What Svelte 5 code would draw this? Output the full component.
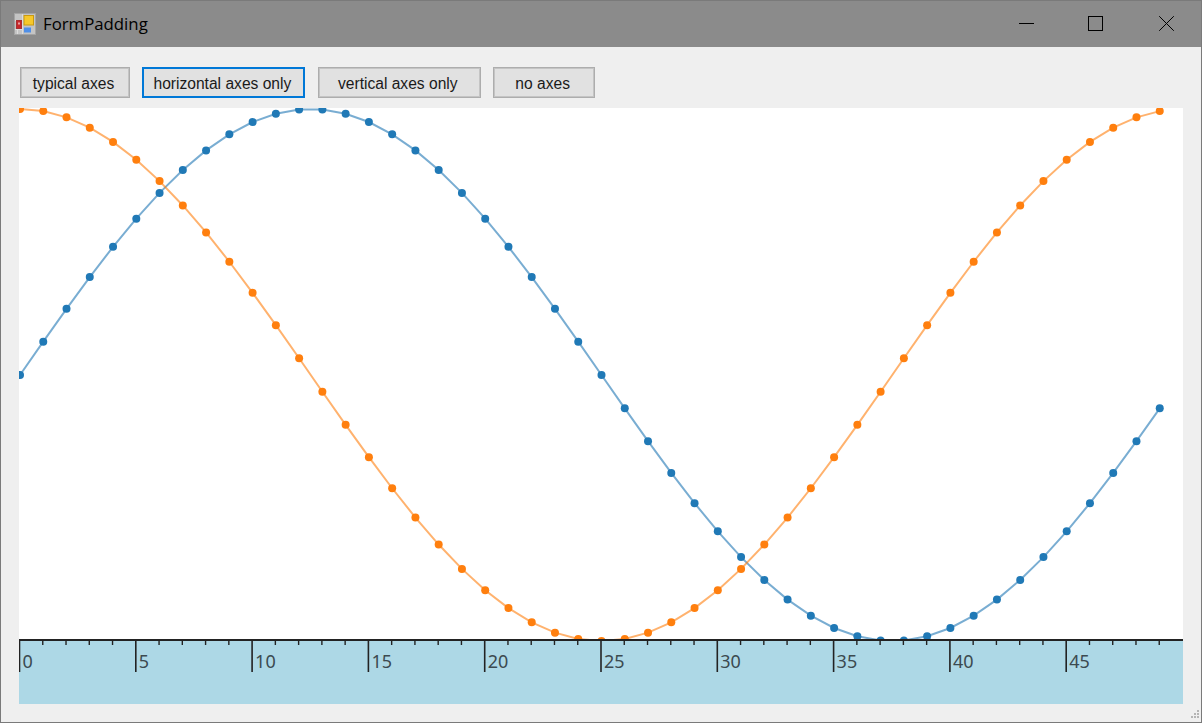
<script>
  const W = 1164, PH = 532, H = 596;
  const X = (i) => 1 + i * 23.26;
  const Ys = (f) => Array.from({ length: 50 }, (_, i) => ({ x: X(i), y: 267 - 266 * f((2 * Math.PI * i) / 50) }));
  const blue = Ys(Math.sin);
  const orange = Ys(Math.cos);
  const pts = (a) => a.map((p) => `${p.x.toFixed(2)},${p.y.toFixed(2)}`).join(' ');
  const ticks = Array.from({ length: 50 }, (_, i) => ({ i, x: X(i) - 0.5, major: i % 5 === 0 }));
  const buttons = [
    { label: 'typical axes', cls: 'w1' },
    { label: 'horizontal axes only', cls: 'w2 focus' },
    { label: 'vertical axes only', cls: 'w2' },
    { label: 'no axes', cls: 'w3' }
  ];
</script>

<div class="window">
  <header class="titlebar">
    <svg class="appicon" width="22" height="22" viewBox="0 0 22 22">
      <rect x="0.5" y="0.5" width="21" height="21" fill="#c4c4c4" stroke="#a4a4a4" />
      <path d="M1 7.5h7M1 16.5h7M8.5 1v20M3.5 16v5" stroke="#dcdcdc" fill="none" />
      <rect x="2.5" y="7.5" width="5" height="8" fill="#c8262a" stroke="#a83034" />
      <rect x="4" y="9.5" width="2" height="2" fill="#e8a0a0" />
      <rect x="10" y="2.5" width="9.5" height="9.5" fill="#f7c82a" stroke="#c99a10" />
      <rect x="10" y="14.5" width="7" height="5" fill="#4f8fe8" />
    </svg>
    <span class="title">FormPadding</span>
    <div class="controls">
      <svg width="15" height="15" viewBox="0 0 15 15"><path d="M0 7.5h15" stroke="#000" fill="none" /></svg>
      <svg width="15" height="15" viewBox="0 0 15 15"><rect x="0.5" y="0.5" width="14" height="14" stroke="#000" fill="none" /></svg>
      <svg class="close" width="15" height="15" viewBox="0 0 15 15"><path d="M0.2 0.2l14.6 14.6M14.8 0.2l-14.6 14.6" stroke="#000" fill="none" /></svg>
    </div>
  </header>

  <div class="toolbar">
    {#each buttons as b}
      <button class={b.cls}>{b.label}</button>
    {/each}
  </div>

  <svg class="plot" width={W} height={H} viewBox="0 0 {W} {H}">
    <defs>
      <clipPath id="data"><rect x="0" y="0" width={W} height={PH} /></clipPath>
    </defs>
    <rect width={W} height={PH} fill="#fff" />
    <rect y={PH} width={W} height={H - PH} fill="#add8e6" />
    <g clip-path="url(#data)">
      <polyline points={pts(blue)} fill="none" stroke="#1f77b4" stroke-opacity="0.6" stroke-width="2" />
      <polyline points={pts(orange)} fill="none" stroke="#ff7f0e" stroke-opacity="0.6" stroke-width="2" />
      {#each blue as p}<circle cx={p.x} cy={p.y} r="4" fill="#2079b6" />{/each}
      {#each orange as p}<circle cx={p.x} cy={p.y} r="4" fill="#ff7f0e" />{/each}
    </g>
    <path d="M0 {PH}H{W}" stroke="#222" stroke-width="2" fill="none" />
    {#each ticks as t}
      <path d="M{t.x} {PH}V{PH + (t.major ? 32 : 5)}" stroke="#222" stroke-width={t.major ? 1.6 : 1.4} fill="none" />
      {#if t.major}
        <text x={t.x + 3} y={PH + 27.5} class="tick">{t.i}</text>
      {/if}
    {/each}
  </svg>

  <svg class="grip" width="14" height="14" viewBox="0 0 14 14">
    {#each [[10, 2], [7, 5], [10, 5], [4, 8], [7, 8], [10, 8]] as d}
      <rect x={d[0]} y={d[1]} width="2" height="2" fill="#b4b4b4" />
    {/each}
  </svg>
</div>

<style>
  :global(body) {
    margin: 0;
    background: #efefef;
  }
  .window {
    position: relative;
    box-sizing: border-box;
    width: 1202px;
    height: 723px;
    background: #efefef;
    border: 1px solid #7a7a7a;
    display: flex;
    flex-direction: column;
    overflow: hidden;
  }
  .titlebar {
    height: 46px;
    flex: none;
    background: #8b8b8b;
    display: flex;
    align-items: center;
    padding: 0 0 0 13px;
  }
  .appicon {
    flex: none;
    margin-top: -1px;
  }
  .title {
    margin-left: 7px;
    margin-top: -1px;
    font: 16.8px "Open Sans", "Noto Sans", sans-serif;
    color: #000;
  }
  .controls {
    margin-left: auto;
    display: flex;
    align-items: center;
    margin-right: 27px;
    gap: 54px;
    margin-top: -1px;
  }
  .close {
    margin-left: 2px;
  }
  .toolbar {
    display: flex;
    gap: 12.4px;
    padding: 20px 0 0 19px;
    height: 41px;
    box-sizing: content-box;
    flex: none;
  }
  button {
    box-sizing: border-box;
    height: 31px;
    margin: 0;
    padding: 2px 3px 0 0;
    background: #e1e1e1;
    border: 1px solid #adadad;
    outline: 1px solid #c4c4c4;
    outline-offset: -2px;
    font: 15.6px "Liberation Sans", Arial, sans-serif;
    color: #1a1a1a;
  }
  .w1 { width: 110px; }
  .w2 { width: 163px; }
  .w3 { width: 102px; }
  .focus {
    border: 2px solid #0078d7;
    outline: none;
  }
  .plot {
    display: block;
    flex: none;
    margin: 0 0 0 18px;
  }
  .tick {
    font: 18px "Noto Sans", "Open Sans", sans-serif;
    fill: #3c4a50;
  }
  .grip {
    position: absolute;
    right: 0;
    bottom: 0;
  }
</style>
